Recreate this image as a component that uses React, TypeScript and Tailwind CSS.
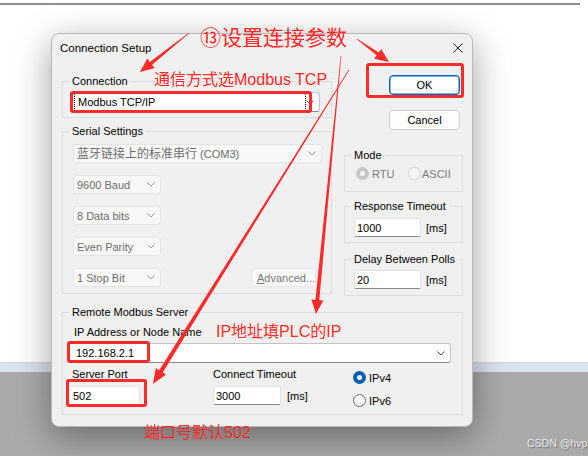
import React from 'react';

const RED = '#ff2a2a';

// tapered annotation arrow: thin at the start, wide at the head
function arrowPoints(x0: number, y0: number, x1: number, y1: number, w0: number, w1: number, L: number, H: number) {
  const dx = x1 - x0;
  const dy = y1 - y0;
  const len = Math.hypot(dx, dy);
  const ux = dx / len;
  const uy = dy / len;
  const nx = -uy;
  const ny = ux;
  const bx = x1 - ux * L;
  const by = y1 - uy * L;
  const pts = [
    [x0 + (nx * w0) / 2, y0 + (ny * w0) / 2],
    [bx + (nx * w1) / 2, by + (ny * w1) / 2],
    [bx + (nx * H) / 2, by + (ny * H) / 2],
    [x1, y1],
    [bx - (nx * H) / 2, by - (ny * H) / 2],
    [bx - (nx * w1) / 2, by - (ny * w1) / 2],
    [x0 - (nx * w0) / 2, y0 - (ny * w0) / 2],
  ];
  return pts.map((p) => p[0].toFixed(1) + ',' + p[1].toFixed(1)).join(' ');
}

function Chevron({ color }: { color: string }) {
  return (
    <svg width="8" height="5" viewBox="0 0 8 5">
      <path d="M0.5 0.5 L4 4 L7.5 0.5" fill="none" stroke={color} strokeWidth="1" />
    </svg>
  );
}

function Combo({ className, disabled, children }: { className: string; disabled?: boolean; children: React.ReactNode }) {
  return (
    <div
      className={`flex items-center justify-between rounded-[3px] border ${
        disabled ? 'border-[#e4e4e4] bg-[#f8f8f8] text-[#6d6d6d]' : 'border-[#c4c4c4] border-b-[#8a8a8a] bg-white text-black'
      } ${className}`}
    >
      <div className="flex min-w-0 flex-1 items-center whitespace-nowrap">{children}</div>
      <div className="pr-[5px]">
        <Chevron color={disabled ? '#a0a0a0' : '#505050'} />
      </div>
    </div>
  );
}

function Edit({ className, children }: { className: string; children: React.ReactNode }) {
  return (
    <div className={`flex h-[19px] items-center rounded-[2px] border border-[#e3e3e3] border-b-[#8a8a8a] bg-white ${className}`}>
      {children}
    </div>
  );
}

function Radio({ on, disabled }: { on?: boolean; disabled?: boolean }) {
  if (on && disabled)
    return (
      <div className="flex size-[13px] items-center justify-center rounded-full bg-[#c6c6c6]">
        <div className="size-[5px] rounded-full bg-[#f4f4f4]" />
      </div>
    );
  if (on)
    return (
      <div className="flex size-[13px] items-center justify-center rounded-full bg-[#005fb8]">
        <div className="size-[5px] rounded-full bg-white" />
      </div>
    );
  if (disabled) return <div className="size-[13px] rounded-full border border-[#d2d2d2] bg-[#f6f6f6]" />;
  return <div className="size-[13px] rounded-full border border-[#6a6a6a] bg-[#f7f7f7]" />;
}

function Legend({ children }: { children: React.ReactNode }) {
  return <legend className="ml-[6px] whitespace-nowrap px-[3px] leading-[12px]">{children}</legend>;
}

export default function App() {
  return (
    <div className="relative h-[456px] w-[588px] overflow-hidden bg-white font-['Liberation_Sans','Noto_Sans_CJK_SC',sans-serif]">
      {/* desktop behind the dialog */}
      <div className="flex h-full flex-col">
        <div className="h-[3px]" />
        <div className="h-[2px] w-[580px] bg-[#8e8e8e]" />
        <div className="flex-1" />
        <div className="h-px bg-[#d4d4d4]" />
        <div className="h-[9px] bg-[#dae3f0]" />
        <div className="h-[84px] bg-[#aaaaaa]" />
      </div>

      {/* Connection Setup dialog */}
      <div className="absolute left-[51px] top-[33px] h-[394px] w-[422px] rounded-[8px] border border-[#b9b9b9] bg-[#f0f0f0] text-[11px] leading-[12px] text-black shadow-[0_10px_36px_rgba(0,0,0,0.38)]">
        <div className="flex h-[28px] items-center justify-between pl-[8px] pr-[9px]">
          <span className="text-[11.5px]">Connection Setup</span>
          <svg width="10" height="10" viewBox="0 0 10 10">
            <path d="M0.5 0.5 L9.5 9.5 M9.5 0.5 L0.5 9.5" stroke="#1a1a1a" strokeWidth="1" />
          </svg>
        </div>

        <div className="flex flex-col pl-[10px]">
          <div className="mt-[13px] flex items-start gap-[12px]">
            {/* left column */}
            <div className="flex w-[270px] flex-col">
              <fieldset className="border border-[#dcdcdc]">
                <Legend>Connection</Legend>
                <div className="pb-[5px] pl-[9px] pt-[5px]">
                  <Combo className="h-[20px] w-[248px]">
                    <div className="ml-[1px] flex h-[18px] w-[232px] items-center border border-dotted border-black pl-[3px]">
                      Modbus TCP/IP
                    </div>
                  </Combo>
                </div>
              </fieldset>

              <fieldset className="mt-[7px] border border-[#dcdcdc]">
                <Legend>Serial Settings</Legend>
                <div className="pb-[6px] pl-[10px] pt-[7px]">
                  <Combo disabled className="h-[19px] w-[249px]">
                    <span className="pl-[3px]">
                      <span className="text-[12px]">蓝牙链接上的标准串行</span> (COM3)
                    </span>
                  </Combo>
                  <div className="mt-[12px] flex flex-col gap-[12px]">
                    <Combo disabled className="h-[19px] w-[88px]">
                      <span className="pl-[3px]">9600 Baud</span>
                    </Combo>
                    <Combo disabled className="h-[19px] w-[88px]">
                      <span className="pl-[3px]">8 Data bits</span>
                    </Combo>
                    <Combo disabled className="h-[19px] w-[88px]">
                      <span className="pl-[3px]">Even Parity</span>
                    </Combo>
                    <div className="flex items-center">
                      <Combo disabled className="h-[19px] w-[88px]">
                        <span className="pl-[3px]">1 Stop Bit</span>
                      </Combo>
                      <div className="ml-[90px] flex h-[19px] w-[65px] items-center overflow-hidden whitespace-nowrap rounded-[3px] border border-[#e6e6e6] bg-[#f8f8f8] pl-[5px] text-[#7a7a7a]">
                        <span className="underline">A</span>dvanced...
                      </div>
                    </div>
                  </div>
                </div>
              </fieldset>
            </div>

            {/* right column */}
            <div className="flex w-[119px] flex-col">
              <div className="ml-[45px] flex h-[20px] w-[71px] items-center justify-center rounded-[4px] border border-[#0067c0] bg-[#fdfdfd] shadow-[inset_0_0_0_0.5px_#0067c0]">
                OK
              </div>
              <div className="ml-[45px] mt-[15px] flex h-[20px] w-[71px] items-center justify-center rounded-[4px] border border-[#d0d0d0] bg-[#fdfdfd]">
                Cancel
              </div>

              <fieldset className="mt-[19px] border border-[#dcdcdc]">
                <Legend>Mode</Legend>
                <div className="flex h-[13px] items-center pl-[11px] text-[#7a7a7a] mt-[6px] mb-[11px]">
                  <div className="flex w-[52px] items-center gap-[3px]">
                    <Radio on disabled />
                    <span>RTU</span>
                  </div>
                  <div className="flex items-center gap-[1px]">
                    <Radio disabled />
                    <span>ASCII</span>
                  </div>
                </div>
              </fieldset>

              <fieldset className="mt-[8px] border border-[#dcdcdc]">
                <Legend>Response Timeout</Legend>
                <div className="flex items-center pb-[5px] pl-[9px] pt-[6px]">
                  <Edit className="w-[67px] pl-[2px]">1000</Edit>
                  <span className="ml-[5px]">[ms]</span>
                </div>
              </fieldset>

              <fieldset className="mt-[10px] border border-[#dcdcdc]">
                <Legend>Delay Between Polls</Legend>
                <div className="flex items-center pb-[6px] pl-[9px] pt-[5px]">
                  <Edit className="w-[67px] pl-[2px]">20</Edit>
                  <span className="ml-[5px]">[ms]</span>
                </div>
              </fieldset>
            </div>
          </div>

          <fieldset className="mt-[10px] w-[401px] border border-[#dcdcdc]">
            <Legend>Remote Modbus Server</Legend>
            <div className="pb-[7px] pt-[8px]">
              <div className="pl-[11px]">IP Address or Node Name</div>
              <Combo className="ml-[5px] mt-[5px] h-[20px] w-[383px]">
                <span className="pl-[7px]">192.168.2.1</span>
              </Combo>
              <div className="mt-[5px] flex items-start pl-[5px]">
                <div className="flex w-[145px] flex-col">
                  <span className="pl-[4px]">Server Port</span>
                  <Edit className="mt-[6px] w-[72px] pl-[4px]">502</Edit>
                </div>
                <div className="flex w-[140px] flex-col">
                  <span>Connect Timeout</span>
                  <div className="mt-[6px] flex items-center">
                    <Edit className="w-[68px] pl-[2px]">3000</Edit>
                    <span className="ml-[6px]">[ms]</span>
                  </div>
                </div>
                <div className="mt-[3px] flex flex-col gap-[10px]">
                  <div className="flex items-center gap-[3px]">
                    <Radio on />
                    <span>IPv4</span>
                  </div>
                  <div className="flex items-center gap-[3px]">
                    <Radio />
                    <span>IPv6</span>
                  </div>
                </div>
              </div>
            </div>
          </fieldset>
        </div>
      </div>

      {/* red highlight boxes */}
      <div className="pointer-events-none absolute left-[70px] top-[91px] h-[22px] w-[242px] rounded-[3px] border-[3px] border-[#ff2a2a]" />
      <div className="pointer-events-none absolute left-[366px] top-[63px] h-[35px] w-[98px] rounded-[3px] border-[3px] border-[#ff2a2a]" />
      <div className="pointer-events-none absolute left-[67px] top-[341px] h-[22px] w-[83px] rounded-[3px] border-[3px] border-[#ff2a2a]" />
      <div className="pointer-events-none absolute left-[66px] top-[379px] h-[28px] w-[81px] rounded-[3px] border-[3px] border-[#ff2a2a]" />

      {/* arrows */}
      <svg className="pointer-events-none absolute left-0 top-0" width="588" height="456" viewBox="0 0 588 456">
        <polygon points={arrowPoints(189, 33, 140, 72, 0.8, 3.6, 14, 12)} fill={RED} />
        <polygon points={arrowPoints(357, 39, 389, 62, 0.8, 3.6, 14, 12)} fill={RED} />
        <polygon points={arrowPoints(341, 56, 316, 314, 0.6, 4, 14, 12)} fill={RED} />
        <polygon points={arrowPoints(349, 70, 153, 384, 0.6, 4.2, 15, 12)} fill={RED} />
      </svg>

      {/* annotation labels */}
      <div className="pointer-events-none absolute left-[200px] top-[27px] whitespace-nowrap text-[21px] leading-none text-[#ff2a2a]">
        ⑬设置连接参数
      </div>
      <div className="pointer-events-none absolute left-[154px] top-[72px] whitespace-nowrap text-[16px] leading-none text-[#ff2a2a]">
        通信方式选Modbus TCP
      </div>
      <div className="pointer-events-none absolute left-[216px] top-[324px] whitespace-nowrap text-[16px] leading-none text-[#ff2a2a]">
        IP地址填PLC的IP
      </div>
      <div className="pointer-events-none absolute left-[144px] top-[425px] whitespace-nowrap text-[16px] leading-none text-[#ff2a2a]">
        端口号默认502
      </div>
      <div className="pointer-events-none absolute left-[527px] top-[438px] whitespace-nowrap text-[10.5px] leading-none text-[#ececec] [text-shadow:1px_1px_1px_rgba(0,0,0,0.35)]">
        CSDN @hvp
      </div>
    </div>
  );
}
